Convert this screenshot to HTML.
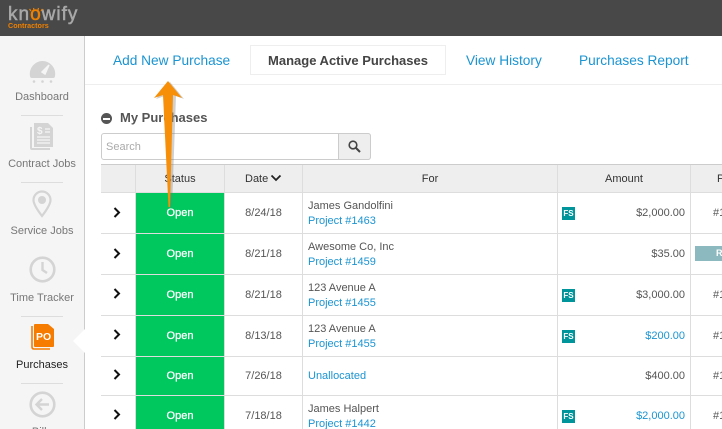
<!DOCTYPE html>
<html><head><meta charset="utf-8"><style>
html,body{margin:0;padding:0;overflow:hidden;width:722px;height:429px}
body{background:#fff;font-family:"Liberation Sans",sans-serif}
#w{position:relative;width:722px;height:429px;overflow:hidden;background:#fff}
.a{position:absolute;white-space:nowrap}
.top{left:0;top:0;width:722px;height:36px;background:#484848}
.side{left:0;top:36px;width:84px;height:393px;background:#f5f5f5;border-right:1px solid #ccc}
.sl{left:0;width:84px;text-align:center;font-size:11px;color:#777}
.sep{left:21px;width:42px;height:1px;background:#ddd}
.tab{font-size:13.7px;color:#1b94d2;top:53px}
.hc{top:173px;font-size:11px;color:#333;text-align:center}
.v{background:#ddd;width:1px}
.h{left:101px;width:621px;height:1px;background:#ddd}
.st{left:136px;width:88px;background:#00c85f;color:#fff;font-size:11px;-webkit-text-stroke:.25px #fff;text-align:center}
.d{left:225px;width:77px;text-align:center;font-size:11px;color:#555}
.n{left:308px;font-size:11px;color:#555}
.l{left:308px;font-size:11px;color:#1b94d2}
.am{right:37px;font-size:11px;color:#555}
.fs{left:562px;width:13px;height:13px;background:#00959b;color:#fff;font-size:8px;font-weight:bold;line-height:13px;text-align:center}
.hash{left:713px;font-size:11px;color:#555}
</style></head><body><div id="w">
<div class="a top"></div>
<div class="a" style="left:8px;top:3px;font-size:19px;color:#a8a8a8;-webkit-text-stroke:.5px #a8a8a8;letter-spacing:1px;line-height:24px">kn<span style="color:#f08000;-webkit-text-stroke:.5px #f08000">o</span>wify</div>
<div class="a" style="left:8px;top:21px;font-size:7.2px;font-weight:bold;color:#f08000;line-height:9px">Contractors</div>
<svg class="a" style="left:28px;top:6px" width="16" height="6" viewBox="0 0 16 6"><path d="M3 5 1.500 3M6 4 5.500 2M10 4 10.500 2M13 5 14.500 3" stroke="#f08000" stroke-width="1.200"/></svg>

<div class="a side"></div>
<svg class="a" style="left:29px;top:56px" width="27" height="27" viewBox="0 0 27 27"><path d="M1 20a12.700 12.700 0 1 1 25 0q0 2-2 2H3q-2 0-2-2z" fill="#d4d4d4"/><path d="M13 16 20 9 16 18z" fill="#f5f5f5" stroke="#f5f5f5" stroke-width="1.500"/><circle cx="5" cy="25.500" r="1.300" fill="#d4d4d4"/><circle cx="13.500" cy="25.500" r="1.300" fill="#d4d4d4"/><circle cx="22" cy="25.500" r="1.300" fill="#d4d4d4"/></svg>
<div class="a sl" style="top:91px">Dashboard</div>
<div class="a sep" style="top:115px"></div>
<svg class="a" style="left:30px;top:122px" width="25" height="28" viewBox="0 0 25 28"><path d="M1 5v21q0 1 1 1h18" fill="none" stroke="#d4d4d4" stroke-width="2"/><path d="M4 1h14l5 5v19H4z" fill="#d4d4d4"/><path d="M7 15h13M7 18h13M7 21h13M15 7h5M15 10h5" stroke="#f5f5f5" stroke-width="1.300"/><text x="7" y="12" font-size="10" font-weight="bold" fill="#f5f5f5" font-family="Liberation Sans">$</text></svg>
<div class="a sl" style="top:158px">Contract Jobs</div>
<div class="a sep" style="top:182px"></div>
<svg class="a" style="left:32px;top:190px" width="20" height="28" viewBox="0 0 20 28"><path d="M10 1.500a8.500 8.500 0 0 1 8.500 8.500q0 5-8.500 16Q1.500 15 1.500 10A8.500 8.500 0 0 1 10 1.500z" fill="none" stroke="#d4d4d4" stroke-width="2.200"/><circle cx="10" cy="10" r="4" fill="#d4d4d4"/></svg>
<div class="a sl" style="top:225px">Service Jobs</div>
<svg class="a" style="left:29px;top:256px" width="27" height="27" viewBox="0 0 27 27"><circle cx="13.500" cy="13.500" r="11.800" fill="none" stroke="#d4d4d4" stroke-width="2.600"/><path d="M13.500 6v8l4.500 3" fill="none" stroke="#d4d4d4" stroke-width="2.400"/></svg>
<div class="a sl" style="top:292px">Time Tracker</div>
<div class="a sep" style="top:316px"></div>
<svg class="a" style="left:30px;top:323px" width="25" height="28" viewBox="0 0 25 28"><path d="M2 3v21q0 2 2 2h16" fill="none" stroke="#f57c00" stroke-width="1.600"/><path d="M5 1h13l6 5v17q0 1-1 1H5q-1 0-1-1V2q0-1 1-1z" fill="#f57c00"/><text x="6" y="17" font-size="10.500" font-weight="bold" fill="#fff" font-family="Liberation Sans">PO</text></svg>
<div class="a sl" style="top:359px;color:#222">Purchases</div>
<div class="a sep" style="top:383px"></div>
<svg class="a" style="left:29px;top:391px" width="27" height="27" viewBox="0 0 27 27"><circle cx="13.500" cy="13.500" r="11.800" fill="none" stroke="#d4d4d4" stroke-width="2.600"/><path d="M20 13.500H8M13 8l-5.500 5.500L13 19" fill="none" stroke="#d4d4d4" stroke-width="2.400"/></svg>
<div class="a sl" style="top:426px">Bills</div>
<svg class="a" style="left:72px;top:329px" width="13" height="24" viewBox="0 0 13 24"><path d="M13 0 1 12l12 12z" fill="#fff"/></svg>

<div class="a" style="left:85px;top:84px;width:637px;height:1px;background:#eee"></div>
<div class="a tab" style="left:113px">Add New Purchase</div>
<div class="a" style="left:250px;top:45px;width:194px;height:28px;border:1px solid #eee;line-height:29px;text-align:center;font-size:13px;font-weight:bold;color:#444">Manage Active Purchases</div>
<div class="a tab" style="left:466px">View History</div>
<div class="a tab" style="left:579px">Purchases Report</div>

<div class="a" style="left:101px;top:113px;width:11px;height:11px;border-radius:50%;background:#555"></div>
<div class="a" style="left:103px;top:118px;width:7px;height:2px;background:#fff"></div>
<div class="a" style="left:120px;top:110px;font-size:13px;font-weight:bold;color:#555">My Purchases</div>
<div class="a" style="left:101px;top:133px;width:268px;height:25px;border:1px solid #ccc;border-radius:3px"></div>
<div class="a" style="left:106px;top:141px;font-size:11px;color:#aaa">Search</div>
<div class="a" style="left:338px;top:133px;width:31px;height:25px;border:1px solid #ccc;border-radius:0 3px 3px 0;background:#eee"></div>
<svg class="a" style="left:348px;top:140px" width="13" height="13" viewBox="0 0 13 13"><circle cx="5" cy="5" r="3.800" fill="none" stroke="#444" stroke-width="1.600"/><path d="M8 8l4 4" stroke="#444" stroke-width="2"/></svg>

<div class="a" style="left:101px;top:164px;width:621px;height:28px;background:#eee;border-top:1px solid #ccc"></div>
<div class="a hc" style="left:136px;width:88px">Status</div>
<div class="a hc" style="left:245px">Date</div>
<svg class="a" style="left:270px;top:174px" width="12" height="8" viewBox="0 0 12 8"><path d="M1.500 1.500 6 6l4.500-4.500" fill="none" stroke="#222" stroke-width="1.800"/></svg>
<div class="a hc" style="left:303px;width:254px">For</div>
<div class="a hc" style="left:558px;width:132px">Amount</div>
<div class="a hc" style="left:717px">P</div>

<div class="a h" style="top:192px"></div><div class="a h" style="top:233px"></div><div class="a h" style="top:274px"></div><div class="a h" style="top:315px"></div><div class="a h" style="top:356px"></div><div class="a h" style="top:395px"></div>
<div class="a v" style="left:135px;top:165px;height:264px"></div>
<div class="a v" style="left:224px;top:165px;height:264px"></div>
<div class="a v" style="left:302px;top:165px;height:264px"></div>
<div class="a v" style="left:557px;top:165px;height:264px"></div>
<div class="a v" style="left:690px;top:165px;height:264px"></div>

<div class="a st" style="top:193px;height:40px;line-height:41px">Open</div>
<div class="a st" style="top:234px;height:40px;line-height:41px">Open</div>
<div class="a st" style="top:275px;height:40px;line-height:41px">Open</div>
<div class="a st" style="top:316px;height:40px;line-height:41px">Open</div>
<div class="a st" style="top:357px;height:38px;line-height:39px">Open</div>
<div class="a st" style="top:396px;height:33px;line-height:40px">Open</div>

<svg class="a" style="left:113px;top:207px" width="8" height="11" viewBox="0 0 8 11"><path d="M1.500 1 6 5.500 1.500 10" fill="none" stroke="#111" stroke-width="2"/></svg>
<svg class="a" style="left:113px;top:248px" width="8" height="11" viewBox="0 0 8 11"><path d="M1.500 1 6 5.500 1.500 10" fill="none" stroke="#111" stroke-width="2"/></svg>
<svg class="a" style="left:113px;top:288px" width="8" height="11" viewBox="0 0 8 11"><path d="M1.500 1 6 5.500 1.500 10" fill="none" stroke="#111" stroke-width="2"/></svg>
<svg class="a" style="left:113px;top:329px" width="8" height="11" viewBox="0 0 8 11"><path d="M1.500 1 6 5.500 1.500 10" fill="none" stroke="#111" stroke-width="2"/></svg>
<svg class="a" style="left:113px;top:369px" width="8" height="11" viewBox="0 0 8 11"><path d="M1.500 1 6 5.500 1.500 10" fill="none" stroke="#111" stroke-width="2"/></svg>
<svg class="a" style="left:113px;top:409px" width="8" height="11" viewBox="0 0 8 11"><path d="M1.500 1 6 5.500 1.500 10" fill="none" stroke="#111" stroke-width="2"/></svg>

<div class="a d" style="top:207px">8/24/18</div>
<div class="a d" style="top:248px">8/21/18</div>
<div class="a d" style="top:289px">8/21/18</div>
<div class="a d" style="top:330px">8/13/18</div>
<div class="a d" style="top:370px">7/26/18</div>
<div class="a d" style="top:410px">7/18/18</div>

<div class="a n" style="top:200px">James Gandolfini</div><div class="a l" style="top:215px">Project #1463</div>
<div class="a n" style="top:241px">Awesome Co, Inc</div><div class="a l" style="top:256px">Project #1459</div>
<div class="a n" style="top:282px">123 Avenue A</div><div class="a l" style="top:297px">Project #1455</div>
<div class="a n" style="top:323px">123 Avenue A</div><div class="a l" style="top:338px">Project #1455</div>
<div class="a l" style="top:370px">Unallocated</div>
<div class="a n" style="top:403px">James Halpert</div><div class="a l" style="top:418px">Project #1442</div>

<div class="a fs" style="top:207px">FS</div>
<div class="a fs" style="top:289px">FS</div>
<div class="a fs" style="top:330px">FS</div>
<div class="a fs" style="top:410px">FS</div>

<div class="a am" style="top:207px">$2,000.00</div>
<div class="a am" style="top:248px">$35.00</div>
<div class="a am" style="top:289px">$3,000.00</div>
<div class="a am" style="top:330px;color:#1b94d2">$200.00</div>
<div class="a am" style="top:370px">$400.00</div>
<div class="a am" style="top:410px;color:#1b94d2">$2,000.00</div>

<div class="a" style="left:695px;top:246px;width:27px;height:15px;background:#8cb8bf;color:#fff;font-size:9px;font-weight:bold;line-height:15px;padding-left:21px;box-sizing:border-box;overflow:hidden">R</div>
<div class="a hash" style="top:207px">#1</div>
<div class="a hash" style="top:289px">#1</div>
<div class="a hash" style="top:330px">#1</div>
<div class="a hash" style="top:370px">#1</div>
<div class="a hash" style="top:410px">#1</div>

<svg class="a" style="left:150px;top:78px" width="40" height="132" viewBox="0 0 40 132"><path d="M18 3 32 20 24 17 20 129 19 129 13 17 4 20z" fill="#777" opacity=".35" transform="translate(2 1)"/><path d="M18 3 32 20 23 17 20 129 18.500 129 13 17 4 20z" fill="#f78f08"/></svg>
</div></body></html>
